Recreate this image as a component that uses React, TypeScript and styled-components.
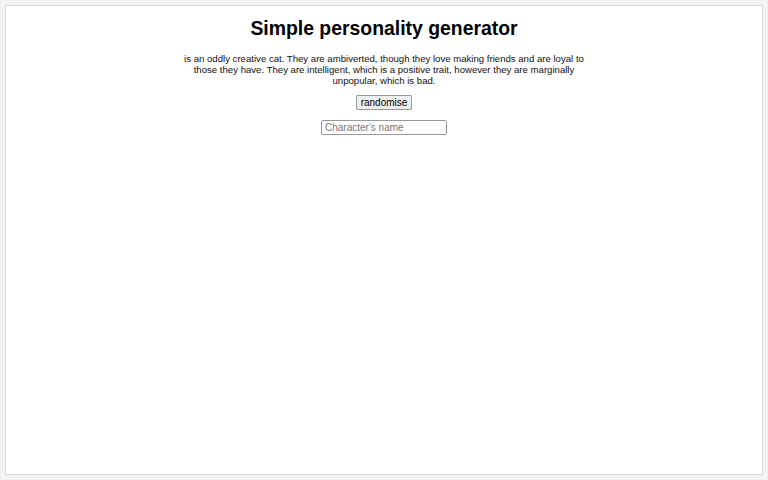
import React from 'react';
import styled, { createGlobalStyle } from 'styled-components';

const GlobalStyle = createGlobalStyle`
  html, body {
    margin: 0;
    padding: 0;
    background: #f2f2f2;
    font-family: "Liberation Sans", Arial, sans-serif;
  }
`;

const Page = styled.div`
  padding: 5px;
  height: 480px;
  box-sizing: border-box;
`;

const Panel = styled.main`
  height: 100%;
  box-sizing: border-box;
  background: #ffffff;
  border: 1px solid #dcdcdc;
  display: flex;
  flex-direction: column;
  align-items: center;
  padding-top: 11px;
`;

const Title = styled.h1`
  font-size: 19.4px;
  font-weight: bold;
  color: #000;
  margin: 0 0 13px;
`;

const Description = styled.p`
  width: 404px;
  margin: 0 0 9px;
  font-size: 9.6px;
  line-height: 11px;
  text-align: center;
  color: #111;
`;

const RandomButton = styled.button`
  font-family: "Liberation Sans", Arial, sans-serif;
  font-size: 10px;
  padding: 1px 4px;
  background: #efefef;
  border: 1px solid #999;
  border-radius: 1px;
  color: #000;
  margin-bottom: 10px;
`;

const NameInput = styled.input`
  width: 126px;
  box-sizing: border-box;
  font-family: "Liberation Sans", Arial, sans-serif;
  font-size: 10px;
  padding: 1px 3px;
  border: 1px solid #999;
  border-radius: 2px;
  &::placeholder {
    color: #777;
  }
`;

export default function App() {
  return (
    <>
      <GlobalStyle />
      <Page>
        <Panel>
          <Title>Simple personality generator</Title>
          <Description>
            is an oddly creative cat. They are ambiverted, though they love making friends and are loyal to
            those they have. They are intelligent, which is a positive trait, however they are marginally
            unpopular, which is bad.
          </Description>
          <RandomButton>randomise</RandomButton>
          <NameInput placeholder="Character's name" />
        </Panel>
      </Page>
    </>
  );
}
